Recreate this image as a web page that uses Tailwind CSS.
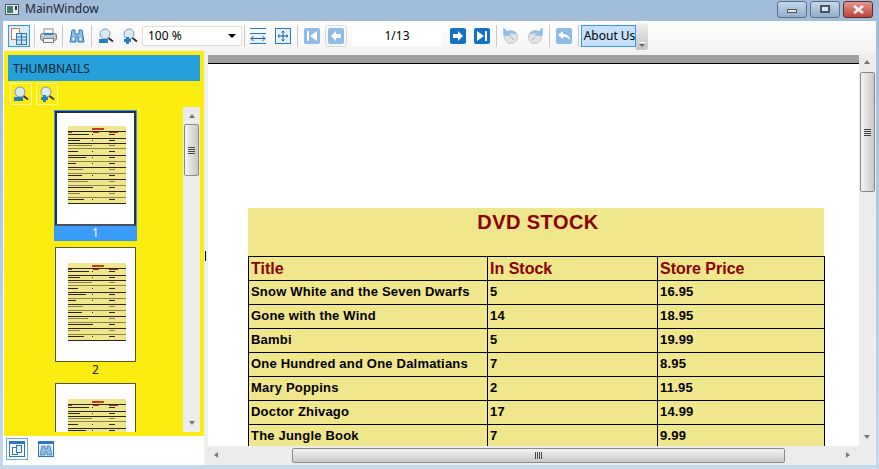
<!DOCTYPE html>
<html lang="en">
<head>
    <meta charset="UTF-8">
    <meta name="viewport" content="width=device-width, initial-scale=1.0">
    <title>MainWindow</title>
    <script src="https://cdn.jsdelivr.net/npm/@tailwindcss/browser@4"></script>
</head>
<body class="w-[879px] h-[469px] overflow-hidden flex flex-col bg-gradient-to-b from-[#a1bcd8] to-[#c4d8ee] font-['Noto_Sans',sans-serif] text-[12px] text-black">

    <!-- icons used more than once -->
    <svg class="hidden">
        <symbol id="zoomOut" viewBox="0 0 16 16">
            <circle cx="7" cy="6" r="5" fill="#dbe9f4" stroke="#7f97ab"/>
            <path d="M10.5 10l4.5 3.500" stroke="#333" stroke-width="2"/>
            <rect x="1" y="11" width="9" height="4" fill="#1f7fc4"/>
        </symbol>
        <symbol id="zoomIn" viewBox="0 0 16 16">
            <circle cx="7" cy="6" r="5" fill="#dbe9f4" stroke="#7f97ab"/>
            <path d="M10.5 10l4.500 3.500" stroke="#333" stroke-width="2"/>
            <path d="M4 9h3v2h2v3H7v2H4v-2H2v-3h2z" fill="#1f7fc4"/>
        </symbol>
        <symbol id="binoculars" viewBox="0 0 16 16">
            <path d="M3 2h3v4h4V2h3l2 12H9V9H7v5H1z" fill="#8fc0ea" stroke="#2a78c0"/>
            <path d="M3 9h3v4H3zM10 9h3v4h-3z" fill="#f0f7fd" stroke="#2a78c0" stroke-width=".5"/>
        </symbol>
        <symbol id="thumb" viewBox="0 0 58 78">
            <rect width="58" height="78" fill="#f0e68c"/>
            <rect x="24" y="2" width="12" height="2" fill="#c0392b"/>
            <g fill="#a8321f"><rect x="0" y="6" width="4" height="1"/><rect x="25" y="6" width="6" height="1"/><rect x="41" y="6" width="9" height="1"/></g>
            <g fill="#2a2610">
                <rect y="5" width="58" height="1"/><rect y="12" width="58" height="1"/><rect y="17" width="58" height="1"/>
                <rect y="29" width="58" height="1"/><rect y="41" width="58" height="1"/><rect y="53" width="58" height="1"/>
                <rect y="65" width="58" height="1"/><rect y="77" width="58" height="1"/>
                <rect y="8" width="21" height="1"/><rect x="24" y="8" width="1" height="1"/><rect x="41" y="8" width="6" height="1"/>
                <rect y="14" width="12" height="1"/><rect x="24" y="14" width="1" height="1"/><rect x="41" y="14" width="6" height="1"/>
                <rect y="25" width="10" height="1"/><rect x="24" y="25" width="1" height="1"/><rect x="41" y="25" width="6" height="1"/>
                <rect y="31" width="18" height="1"/><rect x="24" y="31" width="1" height="1"/><rect x="41" y="31" width="6" height="1"/>
                <rect y="37" width="8" height="1"/><rect x="24" y="37" width="1" height="1"/><rect x="41" y="37" width="6" height="1"/>
                <rect y="49" width="14" height="1"/><rect x="24" y="49" width="1" height="1"/><rect x="41" y="49" width="6" height="1"/>
                <rect y="61" width="24" height="1"/><rect x="24" y="61" width="1" height="1"/><rect x="41" y="61" width="6" height="1"/>
                <rect y="73" width="16" height="1"/><rect x="24" y="73" width="1" height="1"/><rect x="41" y="73" width="6" height="1"/>
            </g>
            <g fill="#8a8448">
                <rect y="22" width="58" height="1"/><rect y="35" width="58" height="1"/><rect y="47" width="58" height="1"/>
                <rect y="59" width="58" height="1"/><rect y="71" width="58" height="1"/>
                <rect y="19" width="24" height="1"/><rect x="41" y="19" width="6" height="1"/>
                <rect y="43" width="15" height="1"/><rect x="41" y="43" width="6" height="1"/>
                <rect y="55" width="20" height="1"/><rect x="41" y="55" width="6" height="1"/>
                <rect y="67" width="12" height="1"/><rect x="41" y="67" width="6" height="1"/>
            </g>
        </symbol>
    </svg>

    <!-- title bar -->
    <div class="h-[21px] shrink-0 flex items-center pl-[5px] relative">
        <svg width="14" height="11" viewBox="0 0 14 11" class="mb-[3px]">
            <rect x=".5" y=".5" width="13" height="10" fill="#e8eef4" stroke="#555"/>
            <rect x="2" y="2" width="6" height="7" fill="#3f7f72"/>
            <rect x="10" y="2" width="2" height="4" fill="#333"/>
        </svg>
        <span class="ml-[6px] mb-[3px] text-[#1c2530] leading-none">MainWindow</span>
        <div class="ml-auto mr-[6px] mb-[3px] flex gap-[3px]">
            <div class="w-[30px] h-[17px] rounded-[3px] border border-[#5c6f88] bg-gradient-to-b from-[#c6d7ea] to-[#8fadcc] flex items-center justify-center">
                <div class="w-[10px] h-[4px] mt-[3px] bg-[#e6e6e6] border border-[#555]"></div>
            </div>
            <div class="w-[30px] h-[17px] rounded-[3px] border border-[#5c6f88] bg-gradient-to-b from-[#c6d7ea] to-[#8fadcc] flex items-center justify-center">
                <div class="w-[10px] h-[8px] border-2 border-[#4a5564] bg-[#dfe8f2]"></div>
            </div>
            <div class="w-[30px] h-[17px] rounded-[3px] border border-[#5e2a30] bg-gradient-to-b from-[#e3978c] to-[#bd4237] flex items-center justify-center">
                <svg width="11" height="9" viewBox="0 0 11 9"><path d="M1 1l9 7M10 1L1 8" stroke="#f2f2f2" stroke-width="2.6"/></svg>
            </div>
        </div>
    </div>

    <div class="mx-[3px] h-[444px] shrink-0 flex flex-col bg-white">

        <!-- toolbar -->
        <div class="h-[30px] shrink-0 flex items-center pl-[5px] bg-gradient-to-b from-white to-[#f4f4f4]">
            <div class="w-[22px] h-[22px] border border-[#3a96ea] bg-[#dcecfb] flex items-center justify-center">
                <svg width="16" height="17" viewBox="0 0 16 17"><rect x=".5" y=".5" width="8" height="11" fill="#fff" stroke="#d9813a"/><rect x="5.500" y="5.500" width="10" height="11" fill="#cfe5f8" stroke="#2a78c0"/><path d="M6 9h9M6 12h9M10.500 6v10" stroke="#2a78c0"/></svg>
            </div>
            <div class="w-px h-[22px] bg-[#c8c8c8] ml-[4px] mr-[5px]"></div>
            <svg width="17" height="16" viewBox="0 0 17 16"><rect x="4" y="1" width="9" height="5" fill="#fff" stroke="#8a8a8a"/><rect x=".5" y="5.500" width="16" height="7" rx="2" fill="#c4c8cc" stroke="#777"/><rect x="4" y="5" width="9" height="2" fill="#2a85d0"/><rect x="3.500" y="10.500" width="10" height="4" fill="#f4f4f4" stroke="#777"/></svg>
            <div class="w-px h-[22px] bg-[#c8c8c8] ml-[5px] mr-[6px]"></div>
            <svg width="16" height="16"><use href="#binoculars"/></svg>
            <div class="w-px h-[22px] bg-[#c8c8c8] ml-[6px] mr-[6px]"></div>
            <svg width="16" height="16"><use href="#zoomOut"/></svg>
            <svg width="16" height="16" class="ml-[8px]"><use href="#zoomIn"/></svg>
            <div class="w-[100px] h-[20px] ml-[4px] border border-[#dcdcdc] rounded-[2px] bg-white flex items-center justify-between pl-[5px] pr-[3px]">
                <span class="leading-none">100 %</span>
                <div class="w-0 h-0 border-x-[4px] border-x-transparent border-t-[4px] border-t-black mr-[2px]"></div>
            </div>
            <div class="w-px h-[22px] bg-[#c8c8c8] ml-[2px] mr-[5px]"></div>
            <svg width="16" height="16" viewBox="0 0 16 16"><path d="M0 .5h16M0 5.500h16M0 15.500h16" stroke="#2a78c0"/><rect y="6" width="16" height="9" fill="#e4f0fb"/><path d="M1 10.500h14M3.500 8L1 10.500 3.500 13M12.500 8l2.500 2.500-2.500 2.500" stroke="#1a5c9c" fill="none"/></svg>
            <svg width="16" height="16" viewBox="0 0 16 16" class="ml-[9px]"><rect x=".5" y=".5" width="15" height="15" fill="#e4f0fb" stroke="#2a78c0"/><path d="M8 3v10M3 8h10M6.500 4.500L8 3l1.500 1.500M6.500 11.500L8 13l1.500-1.500M4.500 6.500L3 8l1.500 1.500M11.500 6.500L13 8l-1.500 1.500" stroke="#1a5c9c" fill="none"/></svg>
            <div class="w-px h-[22px] bg-[#c8c8c8] ml-[6px] mr-[6px]"></div>

            <svg width="16" height="16" viewBox="0 0 16 16"><rect width="16" height="16" rx="2" fill="#8dbde6"/><path d="M3 3h2v10H3zM13 3v10L6 8z" fill="#fff"/></svg>
            <div class="w-[22px] h-[22px] ml-[5px] border border-[#d8d8d8] rounded-[3px] flex items-center justify-center">
                <svg width="16" height="16" viewBox="0 0 16 16"><rect width="16" height="16" rx="2" fill="#8dbde6"/><path d="M3 8l5-5v3h5v4H8v3z" fill="#fff"/></svg>
            </div>
            <div class="w-[90px] h-[20px] ml-[5px] bg-white flex items-center justify-center leading-none">1/13</div>
            <svg width="16" height="16" viewBox="0 0 16 16" class="ml-[8px]"><rect width="16" height="16" rx="2" fill="#1272c4"/><path d="M13 8L8 3v3H3v4h5v3z" fill="#fff"/></svg>
            <svg width="16" height="16" viewBox="0 0 16 16" class="ml-[8px]"><rect width="16" height="16" rx="2" fill="#1272c4"/><path d="M11 3h2v10h-2zM3 3v10l7-5z" fill="#fff"/></svg>
            <div class="w-px h-[22px] bg-[#c8c8c8] ml-[6px] mr-[6px]"></div>
            <svg width="16" height="16" viewBox="0 0 16 16"><circle cx="8" cy="9" r="6.500" fill="#e2e2e2" stroke="#c4c4c4"/><path d="M1 1v6h6zM4 5a6 6 0 0 1 9 1" fill="#8dbde6" stroke="#8dbde6" stroke-width="1.500"/><path d="M8 9l3 3" stroke="#aaa"/></svg>
            <svg width="16" height="16" viewBox="0 0 16 16" class="ml-[8px]"><circle cx="8" cy="9" r="6.500" fill="#e2e2e2" stroke="#c4c4c4"/><path d="M15 1v6H9zM12 5a6 6 0 0 0-9 1" fill="#8dbde6" stroke="#8dbde6" stroke-width="1.500"/><path d="M8 9l-3 3" stroke="#aaa"/></svg>
            <div class="w-px h-[22px] bg-[#c8c8c8] ml-[6px] mr-[6px]"></div>
            <svg width="16" height="16" viewBox="0 0 16 16"><rect width="16" height="16" rx="2" fill="#8dbde6"/><path d="M2 7l5-4v3c4 0 7 2 7 7-1-3-3-4-7-4v2z" fill="#fff"/></svg>
            <div class="w-px h-[22px] bg-[#c8c8c8] ml-[6px] mr-[2px]"></div>
            <div class="w-[55px] h-[22px] border border-[#3a96ea] bg-[#c4e0fb] flex items-center justify-center pl-[2px] leading-none whitespace-nowrap">About Us</div>
            <div class="w-[12px] h-[27px] rounded-r-[3px] bg-gradient-to-b from-[#f0f0f0] to-[#c4c4c4] flex flex-col items-center justify-end pb-[3px] gap-px">
                <div class="w-[6px] h-px bg-white"></div>
                <div class="w-0 h-0 border-x-[3px] border-x-transparent border-t-[3px] border-t-[#666]"></div>
            </div>
        </div>

        <!-- main area -->
        <div class="h-[414px] flex">

            <!-- thumbnails panel -->
            <div class="w-[200px] shrink-0 ml-px flex flex-col bg-white">
                <div class="h-[385px] bg-[#fcec0f] p-[4px] flex flex-col">
                    <div class="h-[26px] shrink-0 bg-[#25a0da] flex items-center pl-[5px] pt-[2px] text-[#10222e] leading-none">THUMBNAILS</div>
                    <div class="h-[26px] shrink-0 flex items-center gap-[4px] pl-[2px]">
                        <div class="w-[22px] h-[22px] border border-[#fdf6a0] rounded-[2px] flex items-center justify-center"><svg width="16" height="16"><use href="#zoomOut"/></svg></div>
                        <div class="w-[22px] h-[22px] border border-[#fdf6a0] rounded-[2px] flex items-center justify-center"><svg width="16" height="16"><use href="#zoomIn"/></svg></div>
                    </div>
                    <div class="h-[325px] flex overflow-hidden">
                        <div class="w-[175px] overflow-hidden flex flex-col items-center pt-[3px]">
                            <div class="w-[83px] shrink-0 border border-[#2f9bf0] bg-[#3a9cff] flex flex-col items-center text-white">
                                <div class="w-[81px] h-[115px] border-2 border-[#2a2f3a] border-b-[#4a5060] bg-white pt-[13px] pl-[11px]">
                                    <svg width="58" height="78" class="block blur-[0.4px]"><use href="#thumb"/></svg>
                                </div>
                                <div class="h-[14px] leading-[14px]">1</div>
                            </div>
                            <div class="w-[81px] h-[115px] shrink-0 mt-[6px] border border-[#5a5520] bg-white pt-[15px] pl-[12px]">
                                <svg width="58" height="78" class="block blur-[0.4px]"><use href="#thumb"/></svg>
                            </div>
                            <div class="h-[21px] shrink-0 leading-[14px] pt-px text-[#222]">2</div>
                            <div class="w-[81px] h-[115px] shrink-0 border border-[#5a5520] bg-white pt-[15px] pl-[12px]">
                                <svg width="58" height="78" class="block blur-[0.4px]"><use href="#thumb"/></svg>
                            </div>
                        </div>
                        <div class="w-[17px] shrink-0 bg-[#ececec] flex flex-col items-center relative">
                            <div class="w-0 h-0 mt-[7px] border-x-[3px] border-x-transparent border-b-[4px] border-b-[#777]"></div>
                            <div class="w-[15px] h-[52px] mt-[6px] border border-[#8a8a8a] rounded-[2px] bg-gradient-to-r from-[#f4f4f4] to-[#c8c8c8] flex flex-col items-center justify-center gap-px">
                                <div class="w-[7px] h-px bg-[#444]"></div><div class="w-[7px] h-px bg-[#444]"></div><div class="w-[7px] h-px bg-[#444]"></div><div class="w-[7px] h-px bg-[#444]"></div>
                            </div>
                            <div class="w-0 h-0 mt-auto mb-[7px] border-x-[3px] border-x-transparent border-t-[4px] border-t-[#777]"></div>
                        </div>
                    </div>
                </div>
                <div class="flex-1 flex items-center pl-[2px] pb-[4px]">
                    <div class="w-[22px] h-[22px] border border-[#6ea8ea] flex items-center justify-center">
                        <svg width="16" height="16" viewBox="0 0 16 16"><rect x=".5" y=".5" width="15" height="15" fill="#fff" stroke="#2a78c0"/><rect y="0" width="16" height="3" fill="#2a78c0"/><rect x="3.500" y="6.500" width="5" height="7" fill="#fff" stroke="#2a78c0"/><rect x="7.500" y="4.500" width="5" height="7" fill="#e4f0fb" stroke="#2a78c0"/></svg>
                    </div>
                    <div class="w-[16px] h-[16px] ml-[10px] bg-white">
                        <svg width="16" height="16" viewBox="0 0 16 16"><rect x=".5" y=".5" width="15" height="15" fill="#e4f0fb" stroke="#2a78c0"/><rect width="16" height="3" fill="#2a78c0"/><path d="M4 5h3v3h2V5h3l2 9H9v-3H7v3H2z" fill="#8fc0ea" stroke="#1a5c9c" stroke-width=".6"/></svg>
                    </div>
                </div>
            </div>

            <!-- splitter -->
            <div class="w-[3px] shrink-0 bg-[#f0f0f0] flex items-center">
                <div class="w-px h-[10px] ml-[1px] bg-black relative top-[-2px]"></div>
            </div>

            <!-- document viewer -->
            <div class="w-[669px] flex flex-col pt-[4px] pb-[1px] bg-[#f0f0f0]">
                <div class="flex h-[391px]">
                    <div class="w-[651px] ml-px flex flex-col overflow-hidden bg-white">
                        <div class="h-[9px] shrink-0 bg-[#a0a0a0] border-b border-black"></div>
                        <div class="pt-[144px] pl-[40px] font-['Liberation_Sans',Arial,sans-serif]">
                            <div class="w-[576px] h-[48px] bg-[#f0e68c] text-center pl-[4px] text-[20px] leading-[28px] font-bold tracking-[0.45px] text-[#8b0000]">DVD STOCK</div>
                            <table class="w-[577px] table-fixed border-collapse bg-[#f0e68c] text-[13px] font-bold tracking-[0.2px] [&_td]:border [&_td]:border-black [&_td]:h-[24px] [&_td]:p-0 [&_td]:pl-[2px] [&_td]:pb-[2px] [&_td]:leading-none">
                                <colgroup><col class="w-[239px]"><col class="w-[170px]"><col class="w-[167px]"></colgroup>
                                <tr class="text-[#8b0000] text-[16px] tracking-normal [&_td]:pb-0 [&_td]:pt-[2px]"><td>Title</td><td>In Stock</td><td>Store Price</td></tr>
                                <tr><td>Snow White and the Seven Dwarfs</td><td>5</td><td>16.95</td></tr>
                                <tr><td>Gone with the Wind</td><td>14</td><td>18.95</td></tr>
                                <tr><td>Bambi</td><td>5</td><td>19.99</td></tr>
                                <tr><td>One Hundred and One Dalmatians</td><td>7</td><td>8.95</td></tr>
                                <tr><td>Mary Poppins</td><td>2</td><td>11.95</td></tr>
                                <tr><td>Doctor Zhivago</td><td>17</td><td>14.99</td></tr>
                                <tr><td>The Jungle Book</td><td>7</td><td>9.99</td></tr>
                            </table>
                        </div>
                    </div>
                    <!-- vertical scrollbar -->
                    <div class="w-[16px] shrink-0 flex flex-col bg-[#ececec] items-center">
                        <div class="w-0 h-0 mt-[5px] border-x-[3px] border-x-transparent border-b-[4px] border-b-[#777]"></div>
                        <div class="w-[15px] h-[120px] mt-[8px] border border-[#8a8a8a] rounded-[2px] bg-gradient-to-r from-[#f4f4f4] to-[#c8c8c8] flex flex-col items-center justify-center gap-px">
                            <div class="w-[7px] h-px bg-[#444]"></div><div class="w-[7px] h-px bg-[#444]"></div><div class="w-[7px] h-px bg-[#444]"></div><div class="w-[7px] h-px bg-[#444]"></div>
                        </div>
                        <div class="w-0 h-0 mt-auto mb-[7px] border-x-[3px] border-x-transparent border-t-[4px] border-t-[#777]"></div>
                    </div>
                </div>
                <!-- horizontal scrollbar -->
                <div class="h-[18px] mr-px flex items-center bg-[#ececec]">
                    <div class="w-0 h-0 ml-[7px] border-y-[3px] border-y-transparent border-r-[4px] border-r-[#777]"></div>
                    <div class="w-[493px] h-[15px] ml-[74px] border border-[#8a8a8a] rounded-[2px] bg-gradient-to-b from-[#f4f4f4] to-[#c8c8c8] flex items-center justify-center gap-px">
                        <div class="w-px h-[7px] bg-[#444]"></div><div class="w-px h-[7px] bg-[#444]"></div><div class="w-px h-[7px] bg-[#444]"></div><div class="w-px h-[7px] bg-[#444]"></div>
                    </div>
                    <div class="w-0 h-0 ml-[61px] border-y-[3px] border-y-transparent border-l-[4px] border-l-[#777]"></div>
                </div>
            </div>
        </div>
    </div>
</body>
</html>
